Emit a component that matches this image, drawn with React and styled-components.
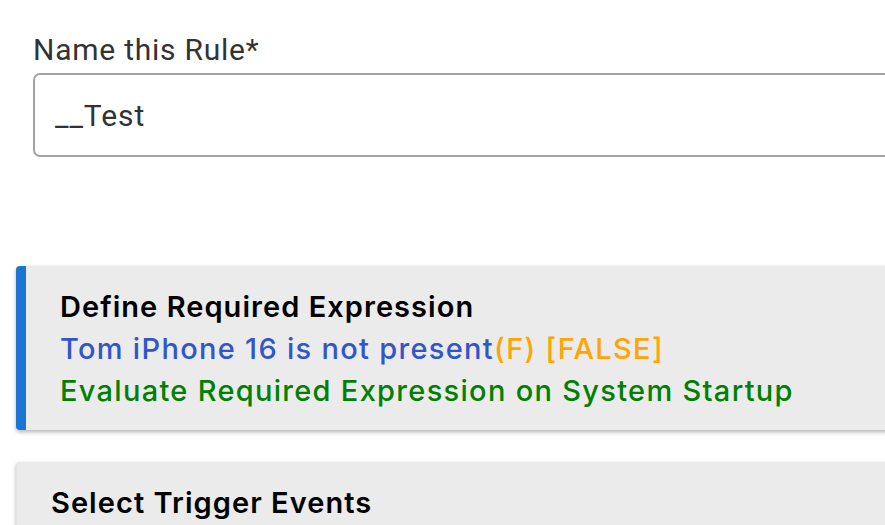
import React from 'react'
import styled, { createGlobalStyle } from 'styled-components'

const GlobalStyle = createGlobalStyle`
  html, body {
    margin: 0;
    padding: 0;
    background: #ffffff;
    overflow: hidden;
  }
`

const Page = styled.div`
  width: 1100px;
  height: 525px;
  overflow: hidden;
  padding: 30px 0 0 16px;
`

const Field = styled.div`
  padding-left: 17px;
`

const Label = styled.div`
  font-family: Roboto, sans-serif;
  font-size: 30px;
  letter-spacing: 0.75px;
  color: #333333;
  line-height: 40px;
  margin-bottom: 3px;
`

const Input = styled.div`
  box-sizing: border-box;
  height: 84px;
  border: 2px solid #a3a3a3;
  border-radius: 7px;
  padding: 0 20px;
  display: flex;
  align-items: center;
  font-family: Roboto, sans-serif;
  font-size: 30px;
  letter-spacing: 0.9px;
  color: #333333;
`

const Card = styled.div`
  background: #ebebeb;
  border-left: ${(p) => (p.$accent ? '10px solid #1c76cf' : '1px solid #e4e4e4')};
  border-radius: 4px;
  box-shadow: 0 2px 4px rgba(0, 0, 0, 0.3);
  padding: 20px 0 18px 34px;
  margin-top: ${(p) => p.$top}px;
  font-family: Inter, sans-serif;
  font-size: 29px;
  letter-spacing: 1.3px;
  line-height: 42px;
  font-weight: 500;
`

const Title = styled.div`
  color: #000000;
  font-weight: 600;
  letter-spacing: 1.05px;
`

const Line = styled.div`
  color: ${(p) => p.$color};
`

const Tag = styled.span`
  color: #ffa500;
`

export default function App() {
  return (
    <>
      <GlobalStyle />
      <Page>
        <Field>
          <Label>Name this Rule*</Label>
          <Input>__Test</Input>
        </Field>
        <Card $accent $top={109}>
          <Title>Define Required Expression</Title>
          <Line $color="#3255c9">
            Tom iPhone 16 is not present<Tag>(F) [FALSE]</Tag>
          </Line>
          <Line $color="#008000">Evaluate Required Expression on System Startup</Line>
        </Card>
        <Card $top={32}>
          <Title>Select Trigger Events</Title>
        </Card>
      </Page>
    </>
  )
}
